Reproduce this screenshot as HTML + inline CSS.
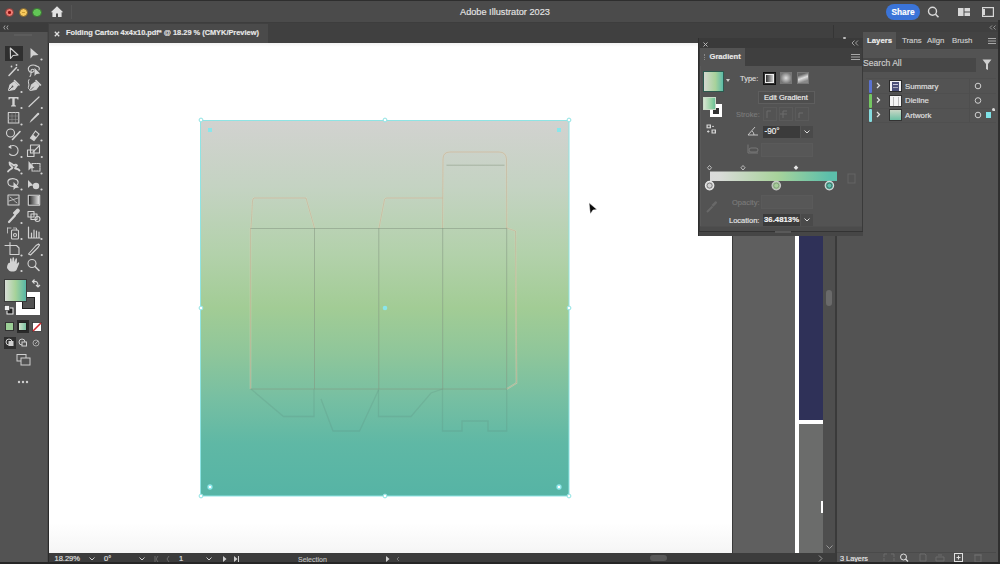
<!DOCTYPE html>
<html><head><meta charset="utf-8">
<style>
*{margin:0;padding:0;box-sizing:border-box}
html,body{width:1000px;height:564px;overflow:hidden;background:#2b2b2b;font-family:"Liberation Sans",sans-serif;}
.a{position:absolute}
#title{left:0;top:0;width:1000px;height:23px;background:#4b4b4b;border-top:1.5px solid #2e2e2e;border-bottom:1px solid #3d3d3d}
#tabbar{left:0;top:23px;width:1000px;height:20px;background:#404040}
#tools{left:0;top:32px;width:48px;height:530px;background:#535353;border-right:1px solid #4a4a4a}
#toolhdr{left:0;top:23px;width:48px;height:9px;background:#3c3c3c}
#canvas{left:49px;top:43px;width:684px;height:510px;background:linear-gradient(180deg,#f2f2f2 0px,#fff 4px,#fff 480px,#f5f5f5 510px)}
#doctab{left:49px;top:24px;width:219px;height:19px;background:#4a4a4a}
#status{left:49px;top:553px;width:786px;height:9px;background:#3c3c3c}
#rgray{left:732px;top:43px;width:63px;height:510px;background:#5f5f5f;border-left:1px solid #3a3a3a}
#rwhite{left:795px;top:43px;width:4px;height:510px;background:#fff}
#rnavy{left:799px;top:235px;width:24px;height:185px;background:#2f3158}
#rgray2{left:799px;top:420px;width:24px;height:133px;background:#6b6c6b;border-top:4px solid #fff}
#rscroll{left:823px;top:43px;width:12px;height:510px;background:#4e4e4e}
#rpanel{left:835px;top:32px;width:165px;height:532px;background:#535353}
.t{position:absolute;white-space:nowrap;color:#e6e6e6;font-size:9px;line-height:1;-webkit-text-stroke:0.15px currentColor}
svg{position:absolute;overflow:visible}
</style></head><body>
<div class="a" id="title"></div>
<div class="a" id="tabbar"></div>
<div class="a" id="toolhdr"></div>
<div class="a" id="tools"></div>
<div class="a" id="doctab"></div>
<div class="a" id="canvas"></div>
<div class="a" id="status"></div>
<div class="a" id="rgray"></div>
<div class="a" id="rwhite"></div>
<div class="a" id="rnavy"></div>
<div class="a" id="rgray2"></div>
<div class="a" id="rscroll"></div>
<div class="a" id="rpanel"></div>


<!-- artboard -->
<div class="a" style="left:201px;top:120px;width:368px;height:376px;background:linear-gradient(180deg,#d2d2d0 0%,#c4d3c2 18%,#b2d1aa 36%,#a2cc95 50%,#8fc69a 62%,#77bfa2 74%,#5fb8a5 86%,#56b4a5 100%)"></div>
<svg style="left:0;top:0" width="1000" height="564" viewBox="0 0 1000 564">
 <rect x="200.5" y="120.5" width="368.5" height="375.5" fill="none" stroke="#8fe4e4" stroke-width="1"/>
 <g fill="#fff" stroke="#8fe4e4" stroke-width="1">
  <circle cx="201" cy="120" r="1.9"/><circle cx="385" cy="120" r="1.9"/><circle cx="569" cy="120" r="1.9"/>
  <circle cx="201" cy="308" r="1.9"/><circle cx="569" cy="308" r="1.9"/>
  <circle cx="201" cy="496" r="1.9"/><circle cx="385" cy="496" r="1.9"/><circle cx="569" cy="496" r="1.9"/>
 </g>
 <g fill="#8ae6ea">
  <rect x="208" y="128" width="4" height="4"/><rect x="557" y="128" width="4" height="4"/>
  <circle cx="385" cy="308" r="2.3"/>
 </g>
 <g fill="#fff" stroke="#8ae6ea" stroke-width="1.3">
  <circle cx="210" cy="487" r="2"/><circle cx="559" cy="487" r="2"/>
 </g>
 <g fill="none" stroke="#e4d8c0" stroke-opacity="0.55" stroke-width="1.6">
  <path d="M251 228 L252.5 201 Q252.6 198 254.5 198 L306 198 L314.5 228"/>
  <path d="M379 228 L384.5 199.5 Q385 198 387 198 L442.5 198"/>
  <path d="M442.5 228 L443 159 Q443 152 450 152 L499 152 Q506 152 506.5 159 L506.7 228"/>
  <path d="M506.7 228 L515.5 231 L516.5 383 L506.7 389"/>
  <path d="M250.5 228 L250.5 389"/>
 </g>
 <g fill="none" stroke="#a89070" stroke-opacity="0.45" stroke-width="0.7">
  <path d="M251 228 L252.5 201 Q252.6 198 254.5 198 L306 198 L314.5 228"/>
  <path d="M379 228 L384.5 199.5 Q385 198 387 198 L442.5 198"/>
  <path d="M442.5 228 L443 159 Q443 152 450 152 L499 152 Q506 152 506.5 159 L506.7 228"/>
  <path d="M506.7 228 L515.5 231 L516.5 383 L506.7 389"/>
  <path d="M250.5 228 L250.5 389"/>
 </g>
 <g fill="none" stroke="#5c8a7c" stroke-opacity="0.22" stroke-width="1.3">
  <path d="M251 389 L283.5 416.5 L314 416.5 L314 389"/>
  <path d="M321 399 L333 431 L359.5 431 L378.5 390"/>
  <path d="M378.5 389 L378.5 416.5 L411 416.5 L431 393 L442.5 389"/>
  <path d="M442.5 389 L442.5 431 L462 431 L462 421 L488 421 L488 431 L506.7 431 L506.7 389"/>
 </g>
 <g fill="none" stroke="#859580" stroke-opacity="0.6" stroke-width="0.9">
  <path d="M250.5 228.5 L506.7 228.5"/>
  <path d="M250.5 389 L506.7 389"/>
  <path d="M314.5 228 L314.5 389 M378.8 228 L378.8 389 M442.7 228 L442.7 389 M506.7 228 L506.7 389"/>
  <path d="M446.5 165.2 L504.5 165.2"/>
 </g>
</svg>
<!-- cursor -->
<svg style="left:588px;top:202px" width="10" height="13" viewBox="0 0 10 13"><path d="M1 0.8 L9 7.6 L5 8 L2.3 12 Z" fill="#0a0a0a" stroke="#fff" stroke-width="0.5"/></svg>


<!-- toolbar -->
<div class="a" style="left:4.5px;top:46px;width:18px;height:14.5px;background:#2f2f2f"></div>
<div class="a" style="left:14px;top:34px;width:18px;height:2px;background:#5c5c5c"></div>
<svg style="left:0;top:0" width="48" height="400" viewBox="0 0 48 400">
<g fill="none" stroke="#d2d2d2" stroke-width="1.1" stroke-linejoin="round" stroke-linecap="round">
 <!-- selection -->
 <path d="M10.3 48 L10.5 58.5 L13 55.5 L18 55 Z"/>
 <!-- wand -->
 <path d="M9 75.5 L16.5 67.5" stroke-width="1.5"/>
 <!-- lasso -->
 <path d="M36 65.5 C31 64 27.5 66.5 28.5 70 C29.5 73 33 73 34 71 C34.5 69 31 68.5 31 71 C31 73 31.5 75 30 76.5" stroke-width="1.1"/><path d="M36 66 C39 66.5 40 68 39 70" stroke-width="1.1"/>
 <!-- pen -->
 <path d="M8.5 90.5 L10 85 L14 82 L17.5 85.5 L14.5 89.5 Z" fill="#d2d2d2"/><path d="M14.5 80.5 L19 85" stroke-width="1.6"/><path d="M9 90 L12 87" stroke="#535353" stroke-width="0.9"/><circle cx="12.5" cy="86.5" r="0.9" fill="#535353" stroke="none"/>
 <!-- curvature pen -->
 <path d="M30 90.5 L31.5 85 L35.5 82 L39 85.5 L36 89.5 Z" fill="#d2d2d2"/><path d="M36 80.5 L40.5 85" stroke-width="1.6"/><path d="M30.5 90 L33.5 87" stroke="#535353" stroke-width="0.9"/><path d="M29 79.5 C27 82 30 84 28.5 87 C28 88 28.5 89 29.5 89.5" stroke-width="1"/>
 <!-- line -->
 <path d="M29 106.5 L39 97" stroke-width="1.2"/>
 <!-- rect -->
 <rect x="8.3" y="112.5" width="10.5" height="10.5"/>
 <path d="M8.5 116 H18.5 M8.5 119.5 H18.5 M12 112.5 V123 M15.5 112.5 V123" stroke-width="0.5" stroke="#9a9a9a"/>
 <!-- shaper -->
 <circle cx="10.5" cy="133" r="4"/>
 <path d="M12.5 139.5 L20 131.5" stroke-width="1.6"/>
 <!-- rotate -->
 <path d="M9.5 147 A5 5 0 1 1 9.5 154"/>
 <!-- scale -->
 <rect x="27.5" y="150" width="6.5" height="6.5"/><rect x="30.5" y="145" width="9" height="8"/>
 <path d="M33 152 L39 146"/>
 <!-- warp -->
 <path d="M8 171.5 C9.5 169 11.5 169.5 12.5 167.5 C11 166 9 165 9.5 162.5 C11.5 163 12.5 165 14 165.5 C15.5 164 16.5 164.5 17 165.5 C16 167 15 167.5 15 168.5 C16.5 169 18.5 168.5 19.5 170.5" stroke-width="1.8"/>
 <!-- free transform -->
 <rect x="32" y="163.5" width="8" height="7.5" stroke-dasharray="1.5 1"/>
 <!-- shape builder -->
 <path d="M8 183 C7 179 12 178 15 179 C19 180 19 184 16 186 C12 187 8 186 8 183 Z"/>
 <!-- mesh -->
 <rect x="8" y="195" width="11" height="10"/>
 <path d="M10 197 C13 199 14 201 17 203 M9 201 C12 200 15 199 18 198" stroke-width="0.8"/>
 <!-- gradient -->
 <rect x="28.3" y="195.3" width="11.4" height="9.8"/>
 <!-- eyedropper -->
 <path d="M9 222 L15 215.5" stroke-width="2.2"/><path d="M13.5 213 L17 209.5 C18.2 208.5 20 210.2 19 211.5 L15.5 215 Z" fill="#d2d2d2"/>
 <!-- blend -->
 <rect x="28" y="211.5" width="6" height="5.5"/><rect x="31" y="214" width="6" height="5.5"/>
 <circle cx="37.5" cy="219" r="2.5"/>
 <!-- symbol sprayer -->
 <rect x="11.5" y="230" width="7" height="9" rx="1"/>
 <path d="M7.5 228 H11 M7.5 228 V233 M13.5 228 H16.5 V230" stroke-width="0.8"/>
 <circle cx="15" cy="235" r="1.5"/>
 <!-- graph -->
 <path d="M28.5 227 V238 H40 M31.5 238 V233 M34 238 V230 M36.5 238 V231 M39 238 V232" stroke-width="1.2"/>
 <!-- artboard -->
 <path d="M5 245.5 H10 M10 242.5 V254.5 H19 V248 L16.5 245.5 H10"/>
 <!-- slice/pencil -->
 <path d="M28.5 254 L36 245.5 L38.5 244 L39.5 245 L38 247.5 L30.5 255 Z"/>
 <!-- zoom -->
 <circle cx="32" cy="263.5" r="4"/>
 <path d="M35 266.5 L39 270.5" stroke-width="1.6"/>
</g>
<g fill="#d2d2d2">
 <path d="M30.5 48 L30.5 58.5 L33 55.5 L38.5 55 Z"/>
 <circle cx="11.5" cy="66.5" r="0.9"/><circle cx="16.5" cy="65" r="0.9"/><circle cx="18" cy="70" r="0.9"/>
 <path d="M34.5 68 L34.5 76 L36.5 74 L40 73.5 Z"/>
 <path d="M8.5 97 H18.5 V99.5 H17.5 L17 98.5 H14.7 V105 L16 105.8 V106.6 H11 V105.8 L12.3 105 V98.5 H10 L9.5 99.5 H8.5 Z"/>
 <path d="M29.5 123 L31 120 L37.5 113 C38.5 112 40 113.5 39 114.5 L32 121 Z"/>
 <path d="M30.5 138 L35.5 131 L39 134 L34 140.5 Z" fill="none" stroke="#d2d2d2" stroke-width="1.1"/>
 <path d="M30.5 138 L33 134.5 L36.5 137.5 L34 140.5 Z"/>
 <path d="M8 147 L11 145 L11.5 149 Z"/>
 <path d="M28.5 161 L28.5 170.5 L30.8 168.3 L34.5 168 Z"/>
 <path d="M13.5 182 L13.5 190 L15.5 188 L19 187.5 Z"/>
 <path d="M28 180 L28 188 L30 186 L33.5 185.5 Z"/>
 <circle cx="36" cy="186" r="3.2"/>
 <path d="M7 268 C7 264 9 262 10 263 L10 259 C10 258 11.5 258 11.5 259 L12 262 L12.5 258 C12.5 257 14 257 14 258 L14.5 262 L15.5 259 C15.5 258 17 258 17 259 L16.8 264 L18 262.5 C19 262 19.5 263 19 264 L16.5 270 C15 272 10 272 8.5 270 Z"/>
 <circle cx="21.5" cy="59" r="0" /><circle cx="41.5" cy="59.5" r="1.1"/>
 <circle cx="21.5" cy="92" r="1.1"/><circle cx="21.5" cy="108" r="1.1"/><circle cx="41.8" cy="108" r="1.1"/>
 <circle cx="21.5" cy="124.5" r="1.1"/><circle cx="41.5" cy="124.5" r="1.1"/>
 <circle cx="21.5" cy="140.5" r="1.1"/><circle cx="41.5" cy="140.5" r="1.1"/>
 <circle cx="21.5" cy="157" r="1.1"/><circle cx="41.8" cy="157" r="1.1"/>
 <circle cx="21.5" cy="173.5" r="1.1"/><circle cx="41.5" cy="173.5" r="1.1"/>
 <circle cx="21.5" cy="189.5" r="1.1"/><circle cx="41.5" cy="189.5" r="1.1"/>
 <circle cx="21.5" cy="223" r="1.1"/>
 <circle cx="21.5" cy="239" r="1.1"/><circle cx="41.5" cy="239" r="1.1"/>
 <circle cx="21.5" cy="255.5" r="1.1"/><circle cx="41.8" cy="255" r="1.1"/>
 <circle cx="21.5" cy="271" r="1.1"/>
</g>
<defs><linearGradient id="tg" x1="0" x2="1"><stop offset="0" stop-color="#2a2a2a"/><stop offset="1" stop-color="#e0e0e0"/></linearGradient></defs>
<rect x="29" y="196" width="10" height="8.4" fill="url(#tg)"/>
</svg>
<!-- fill/stroke -->
<div class="a" style="left:16px;top:292px;width:24px;height:23px;background:#fff"></div>
<div class="a" style="left:22px;top:297px;width:12.5px;height:12px;background:#535353;border:1px solid #222"></div>
<div class="a" style="left:4px;top:279px;width:23px;height:22.5px;background:linear-gradient(90deg,#d8dcd6 0%,#a6d29a 50%,#57b7a6 100%);border:1px solid #3a3a3a"></div>
<svg style="left:31px;top:279px" width="10" height="10" viewBox="0 0 10 10"><path d="M2 2.5 C6 2 7 3 7 7.5 M5 6 L7 8 L9 6 M3.5 0.5 L1.5 2.5 L3.5 4.5" fill="none" stroke="#d8d8d8" stroke-width="1.1"/></svg>
<svg style="left:4px;top:305px" width="10" height="10" viewBox="0 0 10 10"><rect x="3" y="3" width="6" height="6" fill="#222" stroke="#eee" stroke-width="1"/><rect x="0.5" y="0.5" width="5" height="5" fill="#eee" stroke="#333" stroke-width="0.6"/></svg>
<div class="a" style="left:16.5px;top:319.5px;width:12.5px;height:13px;background:#2a2a2a"></div>
<div class="a" style="left:4.5px;top:321.5px;width:9px;height:9px;background:#9ccf96;border:1px solid #333"></div>
<div class="a" style="left:18px;top:321.5px;width:9px;height:9px;background:linear-gradient(90deg,#cfe0c9,#7cc4a4);border:1px solid #222"></div>
<svg style="left:32px;top:321.5px" width="10" height="10" viewBox="0 0 10 10"><rect x="0.5" y="0.5" width="9" height="9" fill="#fff" stroke="#333" stroke-width="0.8"/><path d="M1 9 L9 1" stroke="#d0282e" stroke-width="1.6"/></svg>
<div class="a" style="left:3.5px;top:336.5px;width:12px;height:12.5px;background:#2f2f2f"></div>
<svg style="left:0;top:330px" width="48" height="60" viewBox="0 0 48 60">
 <g fill="none" stroke="#cfcfcf" stroke-width="1">
  <circle cx="9" cy="12" r="3"/><rect x="9" y="11.5" width="4" height="4" fill="#cfcfcf"/>
  <circle cx="22" cy="12" r="3"/><rect x="22" y="12" width="4.5" height="4" fill="#535353"/>
  <circle cx="36" cy="13" r="3" stroke="#a8a8a8"/><path d="M35 14 L38 11" stroke="#a8a8a8"/>
  <rect x="17" y="24.5" width="9" height="6.5"/><rect x="21" y="28" width="9" height="7" fill="#535353"/>
 </g>
 <g fill="#cfcfcf"><circle cx="19" cy="52" r="1.2"/><circle cx="23" cy="52" r="1.2"/><circle cx="27" cy="52" r="1.2"/></g>
</svg>


<!-- gradient panel -->
<div class="a" style="left:698px;top:38px;width:165px;height:198px;background:#3a3a3a;border-left:1px solid #2e2e2e"></div>
<div class="a" style="left:700px;top:48px;width:162px;height:18px;background:#3f3f3f"></div>
<div class="a" style="left:700px;top:48px;width:45px;height:18px;background:#535353"></div>
<div class="a" style="left:700px;top:66px;width:162px;height:160px;background:#535353;border-left:1px solid #5a5a5a"></div>
<div class="a" style="left:700px;top:226px;width:162px;height:5px;background:#4b4b4b;border-top:1px solid #4f4f4f"></div>
<div class="a" style="left:699px;top:231px;width:164px;height:5px;background:#464646;border-top:1px solid #333"></div>
<div class="a" style="left:775px;top:231px;width:16px;height:1.5px;background:#595959"></div>
<svg style="left:702.5px;top:41.5px" width="5" height="5" viewBox="0 0 5 5"><path d="M0.5 0.5 L4.5 4.5 M4.5 0.5 L0.5 4.5" stroke="#b8b8b8" stroke-width="1"/></svg>
<div class="a" style="left:703.5px;top:54px;width:1px;height:6px;border-left:1px dotted #8a8a8a"></div><div class="t" style="left:709.5px;top:53px;font-size:7.6px;font-weight:bold;color:#eaeaea">Gradient</div>
<svg style="left:851px;top:40px" width="8" height="6" viewBox="0 0 8 6"><path d="M3.5 0.5 L1 3 L3.5 5.5 M7 0.5 L4.5 3 L7 5.5" fill="none" stroke="#a9a9a9" stroke-width="0.9"/></svg>
<svg style="left:851px;top:54px" width="9" height="6" viewBox="0 0 9 6"><path d="M0 0.5 H9 M0 3 H9 M0 5.5 H9" stroke="#a9a9a9" stroke-width="1"/></svg>
<div class="a" style="left:703px;top:70.5px;width:21px;height:21.5px;background:linear-gradient(90deg,#d3d9d0 0%,#a8d29b 60%,#5cbaa8 100%);border:1px solid #2c5a4f"></div>
<svg style="left:726px;top:79px" width="4" height="3" viewBox="0 0 4 3"><path d="M0 0 L4 0 L2 3 Z" fill="#cfcfcf"/></svg>
<div class="t" style="left:740px;top:75px;font-size:7.5px;color:#dcdcdc">Type:</div>
<div class="a" style="left:763px;top:71.5px;width:13px;height:13px;border:1.3px solid #111;background:#333"><div style="position:absolute;left:1px;top:1px;right:1px;bottom:1px;border:1px solid #eee;background:linear-gradient(90deg,#333,#ccc)"></div></div>
<div class="a" style="left:780px;top:72px;width:12px;height:12px;border:1px solid #777;background:radial-gradient(circle,#ddd 0%,#777 80%)"></div>
<div class="a" style="left:797px;top:72px;width:12px;height:12px;border:1px solid #777;background:linear-gradient(160deg,#666 20%,#ddd 50%,#888 80%)"></div>
<div class="a" style="left:758px;top:91px;width:57px;height:13px;border:1px solid #5e5e5e;background:#4e4e4e"></div>
<div class="t" style="left:764px;top:93.5px;font-size:7.5px;color:#f0f0f0">Edit Gradient</div>
<!-- fill/stroke small -->
<div class="a" style="left:710px;top:104px;width:12px;height:13px;background:#fff"></div>
<div class="a" style="left:713px;top:108px;width:6px;height:6px;background:#333"></div>
<div class="a" style="left:703px;top:97px;width:13px;height:12.5px;background:linear-gradient(90deg,#d6e4d0,#8fd0a0 70%,#6cc09a);border:0.6px solid #c9dcc8"></div>
<svg style="left:706px;top:124px" width="12" height="10" viewBox="0 0 12 10"><rect x="0.5" y="0.5" width="4.5" height="3.8" fill="#d8d8d8"/><rect x="5.5" y="5.5" width="4.5" height="4" fill="#d8d8d8"/><path d="M6 2.4 H8 M1 7.5 H3.5 M2.25 6.3 V8.7" stroke="#d8d8d8" stroke-width="0.9"/><rect x="1.7" y="1.5" width="2" height="1.8" fill="#555"/><rect x="6.7" y="6.5" width="2" height="2" fill="#555"/></svg>
<div class="t" style="left:736px;top:110.5px;font-size:7.5px;color:#7a7a7a">Stroke:</div>
<div class="a" style="left:763px;top:107px;width:14px;height:14px;border:1px solid #5a5a5a"></div>
<div class="a" style="left:779px;top:107px;width:14px;height:14px;border:1px solid #5a5a5a"></div>
<div class="a" style="left:795px;top:107px;width:14px;height:14px;border:1px solid #5a5a5a"></div>
<svg style="left:763px;top:107px" width="46" height="14" viewBox="0 0 46 14"><path d="M4 11 V4 H8 M20 11 V4 H24 M17 7 H24 M36 11 V6 H40" fill="none" stroke="#6c6c6c" stroke-width="1"/></svg>
<svg style="left:747px;top:126px" width="12" height="10" viewBox="0 0 12 10"><path d="M1 9 L8 1 M1 9 H11 M5 5 A5 5 0 0 1 7 9" fill="none" stroke="#cfcfcf" stroke-width="0.9"/></svg>
<div class="a" style="left:763px;top:125.5px;width:37px;height:12px;background:#3b3b3b"></div>
<div class="t" style="left:764.5px;top:127.5px;font-size:8.2px;color:#f4f4f4">-90°</div>
<div class="a" style="left:800.5px;top:125.5px;width:12px;height:12px;background:#4a4a4a"></div>
<svg style="left:803.5px;top:130px" width="6" height="4" viewBox="0 0 6 4"><path d="M0.5 0.5 L3 3 L5.5 0.5" fill="none" stroke="#dcdcdc" stroke-width="1"/></svg>
<svg style="left:747px;top:144px" width="12" height="11" viewBox="0 0 12 11"><path d="M1 0.5 V9 H11 M4 4 H9 A2 2 0 0 1 9 8 H4 A2 2 0 0 1 4 4 Z" fill="none" stroke="#7a7a7a" stroke-width="0.9"/></svg>
<div class="a" style="left:761px;top:143px;width:52px;height:14px;background:#575757;border:1px solid #5a5a5a"></div>
<!-- slider -->
<svg style="left:700px;top:160px" width="160" height="35" viewBox="700 160 160 35">
 <defs><linearGradient id="gb" x1="0" x2="1"><stop offset="0" stop-color="#dadada"/><stop offset="0.08" stop-color="#d9dbd8"/><stop offset="0.53" stop-color="#a8d39b"/><stop offset="0.94" stop-color="#5cbfab"/><stop offset="1" stop-color="#5cbfab"/></linearGradient></defs>
 <rect x="710" y="171.5" width="127" height="9.5" fill="url(#gb)"/>
 <g fill="#535353" stroke="#d8d8d8" stroke-width="0.8">
  <path d="M709.5 165.5 L711.5 167.7 L709.5 170 L707.5 167.7 Z"/>
  <path d="M743 165.5 L745 167.7 L743 170 L741 167.7 Z"/>
 </g>
 <path d="M796 165.3 L798.3 167.7 L796 170.1 L793.7 167.7 Z" fill="#e8e8e8"/>
 <circle cx="709.6" cy="185.6" r="4.2" fill="#d8d8d8" stroke="#e8e8e8" stroke-width="1.2"/>
 <circle cx="709.6" cy="185.6" r="2.6" fill="#d0d0d0" stroke="#555" stroke-width="0.7"/>
 <circle cx="776.3" cy="185.6" r="4.2" fill="#a6cf99" stroke="#c8c8c8" stroke-width="1.2"/>
 <circle cx="776.3" cy="185.6" r="2.6" fill="#a6cf99" stroke="#666" stroke-width="0.5"/>
 <circle cx="829.4" cy="185.6" r="4.2" fill="#5cbfab" stroke="#d8d8d8" stroke-width="1.2"/>
 <circle cx="829.4" cy="185.6" r="2.6" fill="#5cbfab" stroke="#333" stroke-width="0.6"/>
 <rect x="848" y="174" width="7" height="9" fill="none" stroke="#656565" stroke-width="1"/>
</svg>
<svg style="left:705px;top:200px" width="14" height="14" viewBox="0 0 14 14"><path d="M2 12 L7.5 6.5" stroke="#686868" stroke-width="2"/><path d="M6.5 5 L10 1.5 C11 0.5 12.8 2.3 11.8 3.3 L8.3 6.8 Z" fill="#686868"/></svg>
<div class="t" style="left:732px;top:198.5px;font-size:7.5px;color:#7a7a7a">Opacity:</div>
<div class="a" style="left:761px;top:195px;width:52px;height:14px;background:#575757;border:1px solid #5a5a5a"></div>
<div class="t" style="left:729px;top:216.5px;font-size:7.5px;color:#e6e6e6">Location:</div>
<div class="a" style="left:763px;top:213.5px;width:37px;height:12px;background:#3b3b3b"></div>
<div class="t" style="left:764px;top:215.5px;font-size:7.8px;font-weight:bold;color:#f4f4f4">36.4813%</div>
<div class="a" style="left:800.5px;top:213.5px;width:12px;height:12px;background:#4a4a4a"></div>
<svg style="left:803.5px;top:218px" width="6" height="4" viewBox="0 0 6 4"><path d="M0.5 0.5 L3 3 L5.5 0.5" fill="none" stroke="#dcdcdc" stroke-width="1"/></svg>


<!-- right panel -->
<div class="a" style="left:835px;top:23px;width:28px;height:15px;background:#404040"></div>
<div class="a" style="left:833px;top:25px;width:1px;height:13px;background:#353535"></div>
<div class="a" style="left:842.5px;top:37px;width:3px;height:1.5px;background:#bdbdbd;border-radius:1px"></div>
<div class="a" style="left:835px;top:236px;width:1.5px;height:328px;background:#3a3a3a"></div>
<div class="a" style="left:863px;top:32px;width:137px;height:17px;background:#434343"></div>
<div class="a" style="left:863px;top:32px;width:33px;height:17px;background:#535353"></div>
<div class="t" style="left:867px;top:36.5px;font-size:7.8px;font-weight:bold;color:#f0f0f0">Layers</div>
<div class="t" style="left:902px;top:36.5px;font-size:7.8px;color:#d0d0d0">Trans</div>
<div class="t" style="left:927px;top:36.5px;font-size:7.8px;color:#d0d0d0">Align</div>
<div class="t" style="left:952px;top:36.5px;font-size:7.8px;color:#d0d0d0">Brush</div>
<svg style="left:988px;top:38px" width="8" height="6" viewBox="0 0 8 6"><path d="M0 0.5 H8 M0 3 H8 M0 5.5 H8" stroke="#a9a9a9" stroke-width="1"/></svg>
<svg style="left:989px;top:25px" width="7" height="5" viewBox="0 0 7 5"><path d="M3 0.5 L1 2.5 L3 4.5 M6.5 0.5 L4.5 2.5 L6.5 4.5" fill="none" stroke="#a9a9a9" stroke-width="0.8"/></svg>
<div class="a" style="left:863px;top:57.5px;width:113px;height:14.5px;background:#474747"></div>
<div class="t" style="left:863px;top:59px;font-size:8.6px;color:#cfcfcf">Search All</div>
<svg style="left:982px;top:58.5px" width="10" height="12" viewBox="0 0 10 12"><path d="M0.5 0.5 H9.5 L6 5 V11 L4 10 V5 Z" fill="#cfcfcf"/></svg>
<div class="a" style="left:866px;top:78px;width:130px;height:1px;background:#4f4f4f"></div>
<div class="a" style="left:866px;top:93px;width:130px;height:1px;background:#4f4f4f"></div>
<div class="a" style="left:866px;top:107.5px;width:130px;height:1px;background:#4f4f4f"></div>
<div class="a" style="left:866px;top:122px;width:130px;height:1px;background:#4f4f4f"></div>
<div class="a" style="left:969px;top:79px;width:1px;height:43px;background:#4e4e4e"></div>
<div class="a" style="left:869px;top:79.5px;width:3px;height:13.5px;background:#5a72d0;border-radius:1px"></div>
<div class="a" style="left:869px;top:94px;width:3px;height:13.5px;background:#74c862;border-radius:1px"></div>
<div class="a" style="left:869px;top:108.5px;width:3px;height:13.5px;background:#86dde0;border-radius:1px"></div>
<svg style="left:876px;top:82px" width="5" height="40" viewBox="0 0 5 40"><path d="M1 1 L3.5 3.5 L1 6 M1 15.5 L3.5 18 L1 20.5 M1 30 L3.5 32.5 L1 35" fill="none" stroke="#e0e0e0" stroke-width="1.3"/></svg>
<div class="a" style="left:889px;top:80px;width:12.5px;height:12px;background:#f0f0f4;border:1px solid #2a2a2a"><div style="position:absolute;left:2px;top:0.5px;width:6.5px;height:9px;background:#4a4e78"></div><div style="position:absolute;left:3px;top:3px;width:4.5px;height:1px;background:#c8c8dc"></div><div style="position:absolute;left:3px;top:6px;width:4.5px;height:1px;background:#aab"></div></div>
<div class="a" style="left:889px;top:94.5px;width:12.5px;height:12px;background:#f4f4f4;border:1px solid #333"><div style="position:absolute;left:2.5px;top:1px;width:6px;height:9px;border-left:1px solid #bbb;border-right:1px solid #bbb"></div></div>
<div class="a" style="left:889px;top:109px;width:12.5px;height:12px;background:linear-gradient(180deg,#c9d6c5,#6cc0a4);border:1px solid #333"></div>
<div class="t" style="left:905px;top:82.5px;font-size:7.8px;color:#e0e0e0">Summary</div>
<div class="t" style="left:905px;top:97px;font-size:7.8px;color:#e0e0e0">Dieline</div>
<div class="t" style="left:905px;top:111.5px;font-size:7.8px;color:#e0e0e0">Artwork</div>
<svg style="left:973px;top:81px" width="10" height="40" viewBox="0 0 10 40"><g fill="none" stroke="#d0d0d0" stroke-width="1"><circle cx="5" cy="5" r="2.8"/><circle cx="5" cy="19.5" r="2.8"/><circle cx="5" cy="34" r="2.8"/></g></svg>
<div class="a" style="left:985.5px;top:112px;width:5.5px;height:5.5px;background:#7fe3e8"></div>
<div class="a" style="left:992px;top:108px;width:3px;height:3px;background:#ddd;border-radius:50% 50% 0 50%"></div>
<div class="a" style="left:837px;top:552px;width:159px;height:1px;background:#4a4a4a"></div>
<div class="t" style="left:840px;top:554.5px;font-size:7.3px;color:#e8e8e8">3 Layers</div>
<svg style="left:880px;top:552px" width="110" height="12" viewBox="880 552 110 12">
 <g fill="none" stroke="#6e6e6e" stroke-width="0.9">
  <path d="M884 554 H887 M884 554 V557 M891 554 H894 V557 M884 561 V558 M894 558 V561"/>
  <path d="M920 554 H925 L926 555 V561 H920 Z"/>
  <path d="M936 557 H944 V561 H936 Z M938 555 H942"/>
  <path d="M975 555 H981 V562 H975 Z M974 555 H982"/>
 </g>
 <g fill="none" stroke="#e0e0e0" stroke-width="1">
  <circle cx="903.5" cy="557" r="3"/><path d="M905.5 559 L908 561.5" stroke-width="1.3"/>
  <rect x="954.5" y="553.5" width="8" height="8"/><path d="M958.5 555.5 V559.5 M956.5 557.5 H960.5"/>
 </g>
</svg>
<!-- canvas right scroll -->
<div class="a" style="left:826px;top:290px;width:6px;height:16px;border-radius:3px;background:#6a6a6a"></div>
<svg style="left:826px;top:545px" width="7" height="5" viewBox="0 0 7 5"><path d="M0.5 0.5 L3.5 3.5 L6.5 0.5" fill="none" stroke="#999" stroke-width="1"/></svg>
<div class="a" style="left:821px;top:501px;width:2px;height:12px;background:#fff"></div>
<div class="a" style="left:998px;top:20px;width:2px;height:544px;background:#2f2f2f"></div>


<!-- status bar -->
<div class="a" style="left:0;top:562px;width:1000px;height:2px;background:#262626"></div>
<div class="t" style="left:54.5px;top:555px;font-size:7.5px;color:#e0e0e0">18.29%</div>
<svg style="left:89px;top:557px" width="6" height="4" viewBox="0 0 6 4"><path d="M0.5 0.5 L3 3 L5.5 0.5" fill="none" stroke="#cfcfcf" stroke-width="1"/></svg>
<div class="t" style="left:104px;top:555px;font-size:7.5px;color:#e0e0e0">0°</div>
<svg style="left:138.5px;top:557px" width="6" height="4" viewBox="0 0 6 4"><path d="M0.5 0.5 L3 3 L5.5 0.5" fill="none" stroke="#cfcfcf" stroke-width="1"/></svg>
<svg style="left:150px;top:555px" width="30" height="8" viewBox="0 0 30 8"><path d="M5 1 V7 M8 1 L6 4 L8 7 M19 1 L17 4 L19 7" fill="none" stroke="#6a6a6a" stroke-width="1"/></svg>
<div class="t" style="left:179px;top:555px;font-size:7.5px;color:#e0e0e0">1</div>
<svg style="left:206px;top:557px" width="6" height="4" viewBox="0 0 6 4"><path d="M0.5 0.5 L3 3 L5.5 0.5" fill="none" stroke="#cfcfcf" stroke-width="1"/></svg>
<svg style="left:222px;top:555px" width="20" height="8" viewBox="0 0 20 8"><path d="M1 1 L4.5 4 L1 7 Z M12 1 L15.5 4 L12 7 Z" fill="#cfcfcf"/><path d="M16.5 1 V7" stroke="#cfcfcf" stroke-width="1"/></svg>
<div class="t" style="left:298px;top:555.5px;font-size:7px;color:#bdbdbd">Selection</div>
<svg style="left:385px;top:555px" width="16" height="8" viewBox="0 0 16 8"><path d="M1 1 L4.5 4 L1 7 Z" fill="#cfcfcf"/><path d="M14 2 L12 4 L14 6" fill="none" stroke="#777" stroke-width="1"/></svg>
<div class="a" style="left:650px;top:555px;width:16.5px;height:6px;border-radius:3px;background:#5a5a5a"></div>

<svg style="left:818px;top:555px" width="5" height="7" viewBox="0 0 5 7"><path d="M1 0.5 L4 3.5 L1 6.5" fill="none" stroke="#9a9a9a" stroke-width="1"/></svg>
<!-- title bar content -->
<div class="a" style="left:4.5px;top:7.5px;width:9.5px;height:9.5px;border-radius:50%;background:#ee7b72;border:0.8px solid #7a3a36"></div>
<div class="a" style="left:8px;top:11px;width:2.6px;height:2.6px;border-radius:50%;background:#8c1010"></div>
<div class="a" style="left:18.5px;top:7.5px;width:9.5px;height:9.5px;border-radius:50%;background:#f6c85c;border:0.8px solid #7a6030"></div>
<div class="a" style="left:22px;top:11.5px;width:2.6px;height:1.6px;background:#c99a30"></div>
<div class="a" style="left:32px;top:7.5px;width:9.5px;height:9.5px;border-radius:50%;background:#62c656;border:0.8px solid #3b6e34"></div>
<svg style="left:50px;top:6px" width="14" height="12" viewBox="0 0 14 12"><path d="M7 0.3 L13.2 6.3 L11.6 6.3 L11.6 11 L8 11 L8 7.5 L6 7.5 L6 11 L2.4 11 L2.4 6.3 L0.8 6.3 Z" fill="#e0e0e0"/></svg><div class="a" style="left:71px;top:5px;width:1px;height:14px;background:#555"></div>
<div class="t" style="left:460px;top:8px;font-size:9.2px;color:#e4e4e4">Adobe Illustrator 2023</div>
<div class="a" style="left:885.5px;top:4px;width:34.5px;height:15.5px;border-radius:8px;background:#3b74d8"></div>
<div class="t" style="left:891.5px;top:8.4px;font-size:8.3px;font-weight:bold;color:#fff">Share</div>
<svg style="left:927px;top:6px" width="13" height="13" viewBox="0 0 13 13"><circle cx="5.5" cy="5.2" r="4" fill="none" stroke="#d8d8d8" stroke-width="1.4"/><path d="M8.5 8.2 L11.5 11.2" stroke="#d8d8d8" stroke-width="1.6"/></svg>
<svg style="left:958px;top:8px" width="12" height="8" viewBox="0 0 12 8"><rect x="0" y="0" width="5.5" height="8" fill="#d8d8d8"/><rect x="6.5" y="0" width="5.5" height="3.5" fill="#d8d8d8"/><rect x="6.5" y="4.5" width="5.5" height="3.5" fill="#d8d8d8"/></svg>
<svg style="left:982px;top:7px" width="12" height="10" viewBox="0 0 12 10"><rect x="0.6" y="0.6" width="10.8" height="8.8" fill="none" stroke="#d8d8d8" stroke-width="1.2"/><rect x="1" y="2" width="2" height="6" fill="#d8d8d8"/></svg>

<!-- doc tab -->
<svg style="left:54px;top:30.5px" width="6" height="6" viewBox="0 0 6 6"><path d="M0.8 0.8 L5.2 5.2 M5.2 0.8 L0.8 5.2" stroke="#e0e0e0" stroke-width="1.3"/></svg>
<div class="t" style="left:66px;top:29px;font-size:7.4px;font-weight:bold;color:#e8e8e8">Folding Carton 4x4x10.pdf* @ 18.29 % (CMYK/Preview)</div>
<svg style="left:3px;top:25px" width="6" height="5" viewBox="0 0 6 5"><path d="M2 0.5 L0.8 2.5 L2 4.5 M5 0.5 L3.8 2.5 L5 4.5" fill="none" stroke="#b0b0b0" stroke-width="0.9"/></svg>

</body></html>
